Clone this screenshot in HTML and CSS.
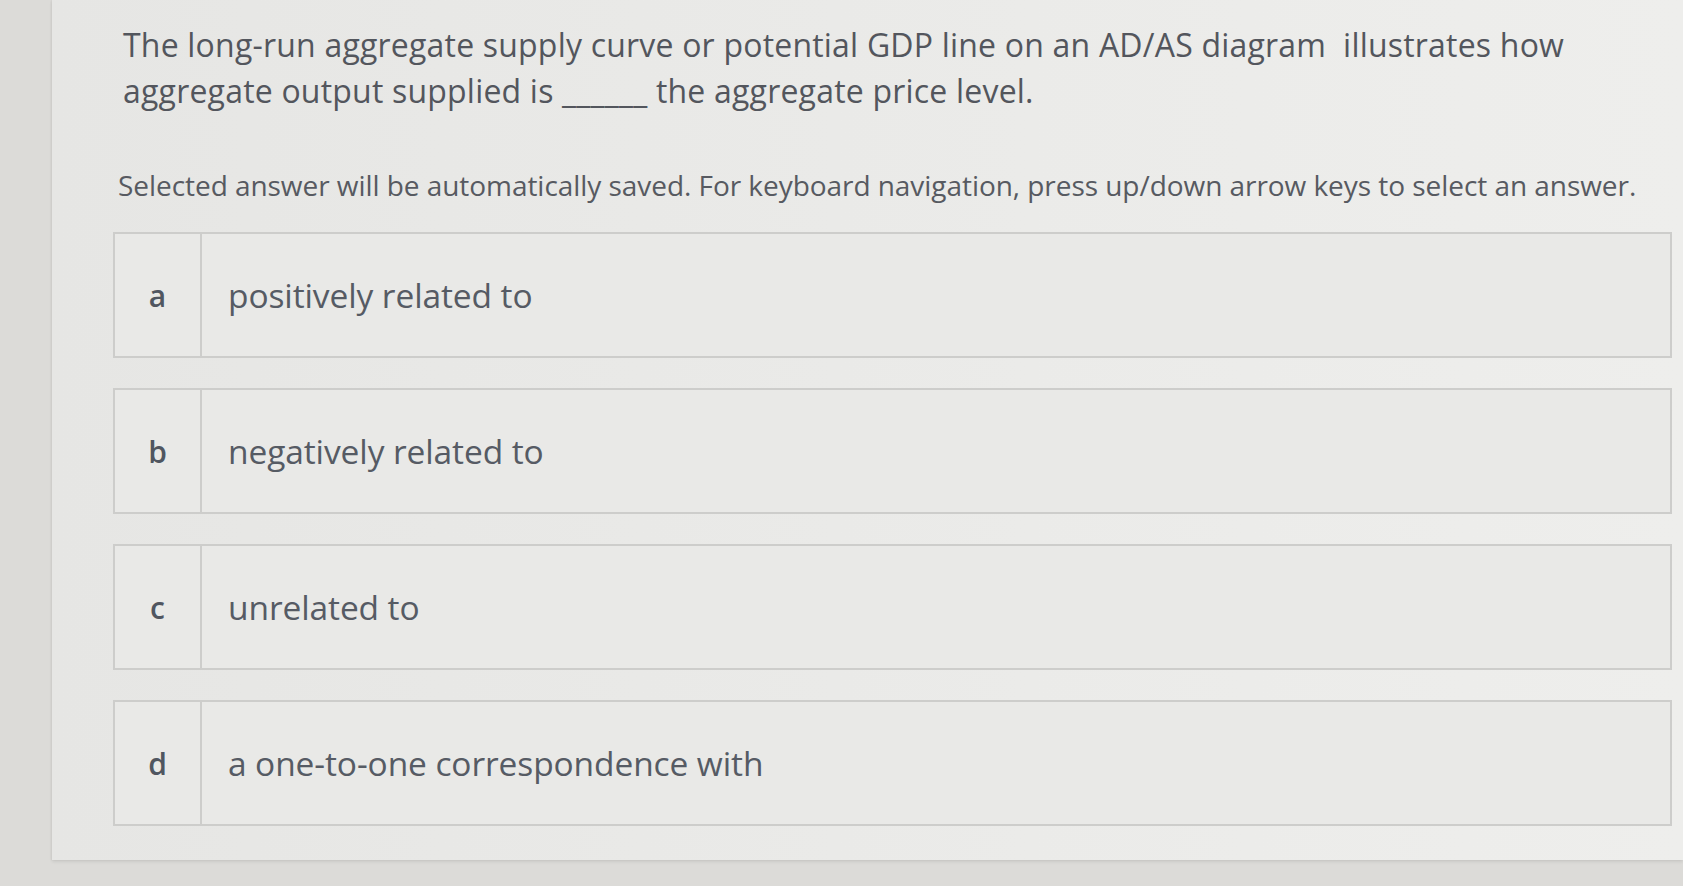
FILE: index.html
```html
<!DOCTYPE html>
<html lang="en">
<head>
<meta charset="utf-8">
<title>Question</title>
<link rel="stylesheet" href="styles.css">
</head>
<body>
<div class="page">
  <main class="card">
    <p class="question">The long-run aggregate supply curve or potential GDP line on an AD/AS diagram&nbsp; illustrates how aggregate output supplied is ______ the aggregate price level.</p>
    <p class="hint">Selected answer will be automatically saved. For keyboard navigation, press up/down arrow keys to select an answer.</p>
    <div class="options" role="radiogroup">
      <div class="option" role="radio" aria-checked="false"><span class="letter">a</span><span class="text">positively related to</span></div>
      <div class="option" role="radio" aria-checked="false"><span class="letter">b</span><span class="text">negatively related to</span></div>
      <div class="option" role="radio" aria-checked="false"><span class="letter">c</span><span class="text">unrelated to</span></div>
      <div class="option" role="radio" aria-checked="false"><span class="letter">d</span><span class="text">a one-to-one correspondence with</span></div>
    </div>
  </main>
</div>
</body>
</html>
```
FILE: styles.css
```css
html, body {
  margin: 0;
  padding: 0;
  height: 100%;
  overflow: hidden;
}
body {
  background: #dcdbd8;
  font-family: "Open Sans", "Liberation Sans", sans-serif;
  color: #5a5d63;
}
.page {
  display: flex;
  padding-left: 52px;
  height: 100%;
}
.card {
  flex: 1;
  height: 860px;
  box-sizing: border-box;
  background: linear-gradient(90deg, #e6e6e4 0%, #ebebe9 60%, #eeeeec 100%);
  padding: 22px 11px 30px 61px;
  box-shadow: 0 2px 3px rgba(0,0,0,0.08), -1px 0 2px rgba(0,0,0,0.05);
  display: flex;
  flex-direction: column;
}
.question {
  margin: 0;
  padding-left: 10px;
  font-size: 32px;
  line-height: 46px;
  letter-spacing: 0.2px;
  color: #53565d;
  max-width: 1500px;
}
.hint {
  margin: 51px 0 0;
  padding-left: 5px;
  font-size: 28px;
  line-height: 40px;
  letter-spacing: -0.05px;
  color: #575a61;
  white-space: nowrap;
}
.options {
  margin-top: 27px;
  display: flex;
  flex-direction: column;
  gap: 30px;
}
.option {
  display: flex;
  flex: none;
  height: 126px;
  border: 2px solid #cdcdcb;
  box-sizing: border-box;
  background: #e9e9e7;
}
.letter {
  width: 85px;
  flex: none;
  border-right: 2px solid #cdcdcb;
  display: flex;
  align-items: center;
  justify-content: center;
  font-size: 30px;
  font-weight: 600;
  color: #505660;
}
.text {
  display: flex;
  align-items: center;
  padding-left: 26px;
  font-size: 33.5px;
  letter-spacing: -0.1px;
  color: #565b64;
}
```
